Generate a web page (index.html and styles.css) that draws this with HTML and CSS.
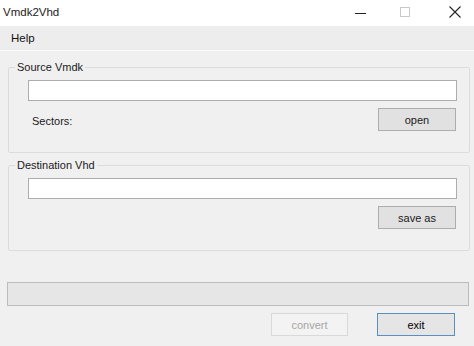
FILE: index.html
```html
<!DOCTYPE html>
<html lang="en">

<head>
    <meta charset="UTF-8">
    <meta name="viewport" content="width=device-width, initial-scale=1.0">
    <title>Vmdk2Vhd</title>
    <link rel="stylesheet" href="styles.css">
</head>

<body>

    <div class="title-bar">
        <span class="title-text">Vmdk2Vhd</span>
        <div class="window-controls">
            <span class="ctl ctl-min">
                <svg width="11" height="11" viewBox="0 0 11 11"><path d="M0 6.5h11" stroke="#222" stroke-width="1"/></svg>
            </span>
            <span class="ctl ctl-max">
                <svg width="11" height="11" viewBox="0 0 11 11"><rect x="0.5" y="0.5" width="9" height="9" fill="none" stroke="#c8c8c8" stroke-width="1"/></svg>
            </span>
            <span class="ctl ctl-close">
                <svg width="12" height="12" viewBox="0 0 12 12"><path d="M0.5 0.5l11 11M11.5 0.5l-11 11" stroke="#222" stroke-width="1.1"/></svg>
            </span>
        </div>
    </div>

    <div class="menu-bar">
        <span class="menu-item">Help</span>
    </div>

    <div class="form-body">
        <fieldset class="group">
            <legend>Source Vmdk</legend>
            <input class="text-box" type="text">
            <div class="group-row">
                <span class="label">Sectors:</span>
                <button class="btn">open</button>
            </div>
        </fieldset>

        <fieldset class="group">
            <legend>Destination Vhd</legend>
            <input class="text-box" type="text">
            <div class="group-row">
                <span class="label"></span>
                <button class="btn">save as</button>
            </div>
        </fieldset>

        <div class="progress"></div>

        <div class="actions">
            <button class="btn btn-disabled" disabled>convert</button>
            <button class="btn btn-default">exit</button>
        </div>
    </div>

</body>

</html>
```

FILE: styles.css
```css
body {
    margin: 0;
    font-family: "Liberation Sans", Arial, sans-serif;
    font-size: 11px;
    color: #1a1a1a;
    background: #f0f0f0;
    height: 346px;
    overflow: hidden;
}

/* title bar */
.title-bar {
    height: 26px;
    background: #fff;
    display: flex;
    justify-content: space-between;
}

.title-text {
    padding-left: 3px;
    line-height: 25px;
    font-size: 11.5px;
    color: #222;
}

.window-controls {
    display: flex;
}

.ctl {
    height: 24px;
    display: flex;
    align-items: center;
    justify-content: center;
}

.ctl-min {
    width: 46px;
}

.ctl-max {
    width: 45px;
}

.ctl-close {
    width: 38px;
    padding-left: 8px;
}

/* menu */
.menu-bar {
    height: 24px;
    background: #ededed;
    border-bottom: 1px solid #f9f9f9;
    display: flex;
    align-items: center;
}

.menu-item {
    padding-left: 11px;
    font-size: 11.5px;
    color: #111;
}

/* form */
.form-body {
    padding: 9px 4px 0 8px;
}

.group {
    margin: 0 0 5px 0;
    padding: 6px 12px 21px 19px;
    border: 1px solid #dcdcdc;
    border-radius: 2px;
    min-width: 0;
}

.group legend {
    padding: 0 2px;
    margin-left: -13px;
    line-height: 14px;
    color: #1a1a1a;
}

.text-box {
    display: block;
    box-sizing: border-box;
    width: 100%;
    height: 21px;
    margin: 0;
    border: 1px solid #adadad;
    background: #fff;
    outline: none;
}

.group-row {
    display: flex;
    justify-content: space-between;
    align-items: center;
    margin-top: 7px;
}

.label {
    padding-left: 4px;
    padding-top: 3px;
}

.btn {
    box-sizing: border-box;
    width: 78px;
    height: 23px;
    margin: 0 1px 0 0;
    padding: 0;
    font-family: "Liberation Sans", Arial, sans-serif;
    font-size: 11px;
    color: #1a1a1a;
    background: #e1e1e1;
    border: 1px solid #adadad;
}

.progress {
    box-sizing: border-box;
    height: 24px;
    margin: 31px 1px 0 -1px;
    background: #e6e6e6;
    border: 1px solid #bcbcbc;
}

.actions {
    display: flex;
    justify-content: flex-end;
    gap: 28px;
    margin-top: 7px;
    padding-right: 14px;
}

.btn-disabled {
    width: 77px;
    color: #a6a6a6;
    background: #f3f3f3;
    border-color: #d9d9d9;
}

.btn-default {
    color: #000;
    background: #e5e5e5;
    border-color: #5b8fc4;
}
```
